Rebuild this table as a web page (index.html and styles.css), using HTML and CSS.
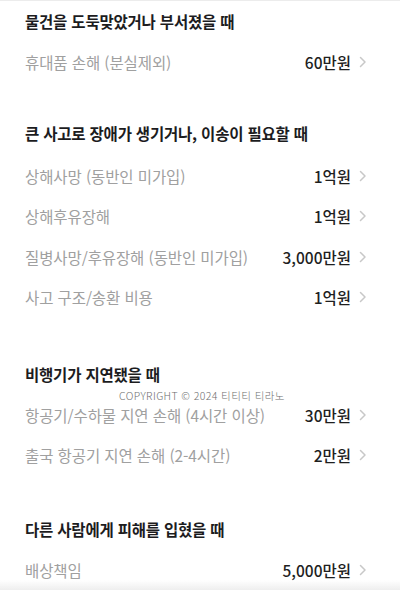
FILE: index.html
```html
<!DOCTYPE html>
<html lang="ko">
<head>
<meta charset="utf-8">
<link rel="stylesheet" href="styles.css">
</head>
<body>
<div class="page">
  <section class="group">
    <h2 class="group-title">물건을 도둑맞았거나 부서졌을 때</h2>
    <div class="row"><span class="label">휴대품 손해 (분실제외)</span><span class="value">60만원</span><svg class="chev" viewBox="0 0 8 12"><path d="M1.5 1.5 L6 6 L1.5 10.5"/></svg></div>
  </section>
  <section class="group group-wide">
    <h2 class="group-title">큰 사고로 장애가 생기거나, 이송이 필요할 때</h2>
    <div class="row"><span class="label">상해사망 (동반인 미가입)</span><span class="value">1억원</span><svg class="chev" viewBox="0 0 8 12"><path d="M1.5 1.5 L6 6 L1.5 10.5"/></svg></div>
    <div class="row"><span class="label">상해후유장해</span><span class="value">1억원</span><svg class="chev" viewBox="0 0 8 12"><path d="M1.5 1.5 L6 6 L1.5 10.5"/></svg></div>
    <div class="row"><span class="label">질병사망/후유장해 (동반인 미가입)</span><span class="value">3,000만원</span><svg class="chev" viewBox="0 0 8 12"><path d="M1.5 1.5 L6 6 L1.5 10.5"/></svg></div>
    <div class="row"><span class="label">사고 구조/송환 비용</span><span class="value">1억원</span><svg class="chev" viewBox="0 0 8 12"><path d="M1.5 1.5 L6 6 L1.5 10.5"/></svg></div>
  </section>
  <section class="group">
    <h2 class="group-title">비행기가 지연됐을 때</h2>
    <div class="row"><span class="label">항공기/수하물 지연 손해 (4시간 이상)</span><span class="value">30만원</span><svg class="chev" viewBox="0 0 8 12"><path d="M1.5 1.5 L6 6 L1.5 10.5"/></svg></div>
    <div class="row"><span class="label">출국 항공기 지연 손해 (2-4시간)</span><span class="value">2만원</span><svg class="chev" viewBox="0 0 8 12"><path d="M1.5 1.5 L6 6 L1.5 10.5"/></svg></div>
    <div class="watermark">COPYRIGHT © 2024 티티티 티라노</div>
  </section>
  <section class="group">
    <h2 class="group-title">다른 사람에게 피해를 입혔을 때</h2>
    <div class="row"><span class="label">배상책임</span><span class="value">5,000만원</span><svg class="chev" viewBox="0 0 8 12"><path d="M1.5 1.5 L6 6 L1.5 10.5"/></svg></div>
  </section>
</div>
<div class="fade"></div>
</body>
</html>
```
FILE: styles.css
```css
html, body {
  margin: 0;
  padding: 0;
  background: #ffffff;
}
body {
  font-family: "Noto Sans CJK KR", "Noto Sans", sans-serif;
  width: 400px;
  height: 590px;
  overflow: hidden;
  border-top: 1px solid #ececec;
  box-sizing: border-box;
}
.page {
  display: flex;
  flex-direction: column;
  gap: 42px;
  padding: 9px 33px 0 25px;
}
.group {
  display: flex;
  flex-direction: column;
  position: relative;
}
.group-wide {
  margin-top: -3px;
  margin-bottom: 3px;
}
.group-wide .group-title {
  margin-bottom: 12px;
}
.group-title {
  margin: 0 0 10px;
  font-size: 15.5px;
  line-height: 22px;
  font-weight: 700;
  color: #1c1c1e;
  letter-spacing: -0.2px;
}
.row {
  display: flex;
  align-items: center;
  height: 40.5px;
}
.label {
  flex: 1;
  font-size: 15.5px;
  color: #a0a0a0;
  letter-spacing: -0.1px;
}
.value {
  font-size: 15.5px;
  font-weight: 500;
  color: #1f1f1f;
  letter-spacing: 0;
}
.chev {
  width: 8px;
  height: 12px;
  margin-left: 8px;
  fill: none;
  stroke: #c8c8c8;
  stroke-width: 1.5;
  stroke-linecap: round;
  stroke-linejoin: round;
}
.watermark {
  position: absolute;
  left: 94px;
  top: 25px;
  font-size: 10.5px;
  color: #6e6e6e;
  letter-spacing: 0.4px;
  font-weight: 300;
}
.fade {
  position: fixed;
  left: 0;
  right: 0;
  bottom: 0;
  height: 10px;
  background: linear-gradient(to bottom, rgba(240,240,240,0), #eeeeee);
}
```
